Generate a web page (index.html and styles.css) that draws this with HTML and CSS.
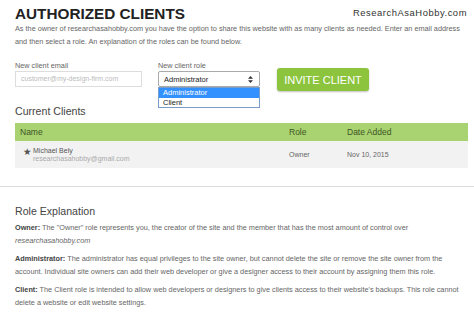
FILE: index.html
```html
<!DOCTYPE html>
<html>
<head>
<meta charset="utf-8">
<link rel="stylesheet" href="styles.css">
</head>
<body>
<div class="page">
  <header class="top">
    <h1 class="title">AUTHORIZED CLIENTS</h1>
    <div class="brand">ResearchAsaHobby.com</div>
  </header>
  <p class="intro">As the owner of researchasahobby.com you have the option to share this website with as many clients as needed. Enter an email address and then select a role. An explanation of the roles can be found below.</p>
  <div class="form">
    <div class="field field-email">
      <div class="label">New client email</div>
      <div class="input">customer@my-design-firm.com</div>
    </div>
    <div class="field field-role">
      <div class="label">New client role</div>
      <div class="select">
        <span>Administrator</span>
        <svg class="arrows" width="5" height="7" viewBox="0 0 5 7"><path d="M2.5 0 L5 2.8 L0 2.8 Z M2.5 7 L5 4.2 L0 4.2 Z" fill="#333"/></svg>
      </div>
      <div class="dropdown">
        <div class="opt opt-active">Administrator</div>
        <div class="opt">Client</div>
      </div>
    </div>
    <button class="invite">INVITE CLIENT</button>
  </div>
  <h2 class="section">Current Clients</h2>
  <div class="table">
    <div class="thead">
      <div class="c-name">Name</div>
      <div class="c-role">Role</div>
      <div class="c-date">Date Added</div>
    </div>
    <div class="trow">
      <div class="c-name person">
        <span class="star">★</span>
        <div>
          <div class="pname">Michael Bely</div>
          <div class="pmail">researchasahobby@gmail.com</div>
        </div>
      </div>
      <div class="c-role">Owner</div>
      <div class="c-date">Nov 10, 2015</div>
    </div>
  </div>
</div>
<div class="rule"></div>
<section class="page roles">
  <h2 class="section">Role Explanation</h2>
  <p class="rp"><b>Owner:</b> The "Owner" role represents you, the creator of the site and the member that has the most amount of control over <i>researchasahobby.com</i></p>
  <p class="rp"><b>Administrator:</b> The administrator has equal privileges to the site owner, but cannot delete the site or remove the site owner from the account. Individual site owners can add their web developer or give a designer access to their account by assigning them this role.</p>
  <p class="rp"><b>Client:</b> The Client role is intended to allow web developers or designers to give clients access to their website's backups. This role cannot delete a website or edit website settings.</p>
</section>
</body>
</html>
```
FILE: styles.css
```css
html, body {
  margin: 0;
  padding: 0;
  background: #fff;
  font-family: "Liberation Sans", Arial, sans-serif;
  color: #555;
}
.page {
  padding: 0 6px 0 15px;
}
.top {
  display: flex;
  justify-content: space-between;
  align-items: flex-start;
  padding-top: 5px;
}
.title {
  margin: 0;
  font-size: 15.3px;
  line-height: 17px;
  font-weight: bold;
  color: #222;
}
.brand {
  font-size: 9.4px;
  letter-spacing: 0.55px;
  color: #333;
  margin-top: 2px;
  margin-right: 1px;
}
.intro {
  margin: 1px 0 0;
  font-size: 7.3px;
  line-height: 12.5px;
  color: #666;
}
.form {
  display: flex;
  align-items: flex-start;
  margin-top: 12px;
}
.field {
  display: flex;
  flex-direction: column;
}
.label {
  font-size: 7.3px;
  line-height: 11px;
  color: #666;
}
.field-email {
  width: 127px;
}
.input {
  height: 14px;
  border: 1px solid #ddd;
  font-size: 7px;
  line-height: 14px;
  color: #bbb;
  padding: 0 5px;
}
.field-role {
  width: 102px;
  margin-left: 16px;
  position: relative;
}
.select {
  height: 14px;
  border: 1px solid #aaa;
  border-radius: 2px;
  display: flex;
  align-items: center;
  justify-content: space-between;
  padding: 0 6px 0 5px;
  font-size: 7.5px;
  color: #222;
  background: #fff;
}
.dropdown {
  position: absolute;
  left: 0;
  top: 27px;
  width: 100px;
  border: 1px solid #7a9cc8;
  background: #fff;
  font-size: 7.5px;
  line-height: 9.5px;
  color: #222;
}
.opt {
  padding: 0 4px;
}
.opt-active {
  background: #3390ff;
  color: #fff;
}
.invite {
  margin-left: 17px;
  margin-top: 8px;
  width: 92px;
  height: 23px;
  border: none;
  border-radius: 3px;
  background: #8cc43e;
  color: #fff;
  font-family: "Liberation Sans", Arial, sans-serif;
  font-size: 11px;
  padding: 0;
  box-shadow: 0 1px 2px rgba(0,0,0,0.25);
}
.section {
  margin: 0;
  font-size: 10.6px;
  font-weight: normal;
  color: #444;
  line-height: 14px;
}
.form + .section {
  margin-top: 13px;
}
.table {
  margin-top: 5px;
}
.thead, .trow {
  display: flex;
  align-items: center;
}
.thead {
  height: 18px;
  background: #a9d370;
  font-size: 8.5px;
  color: #3d5426;
}
.trow {
  height: 27px;
  background: #f2f2f2;
  font-size: 7px;
  color: #666;
}
.c-name {
  width: 269px;
  padding-left: 5px;
}
.c-role {
  width: 58px;
}
.c-date {
  flex: 1;
}
.person {
  display: flex;
  align-items: flex-start;
  padding-left: 8px;
  width: 266px;
}
.star {
  font-size: 9.5px;
  line-height: 9px;
  color: #555;
  width: 10px;
  font-family: "DejaVu Sans", sans-serif;
}
.pname {
  color: #555;
  line-height: 8px;
}
.pmail {
  color: #aaa;
  line-height: 8px;
}
.rule {
  height: 1px;
  background: #ddd;
  margin-top: 18px;
}
.roles .section {
  margin-top: 17px;
}
.rp {
  margin: 6px 0 0;
  font-size: 7.3px;
  line-height: 12.5px;
  color: #666;
}
.rp b {
  color: #444;
}
.roles .section + .rp {
  margin-top: 4px;
}
```
